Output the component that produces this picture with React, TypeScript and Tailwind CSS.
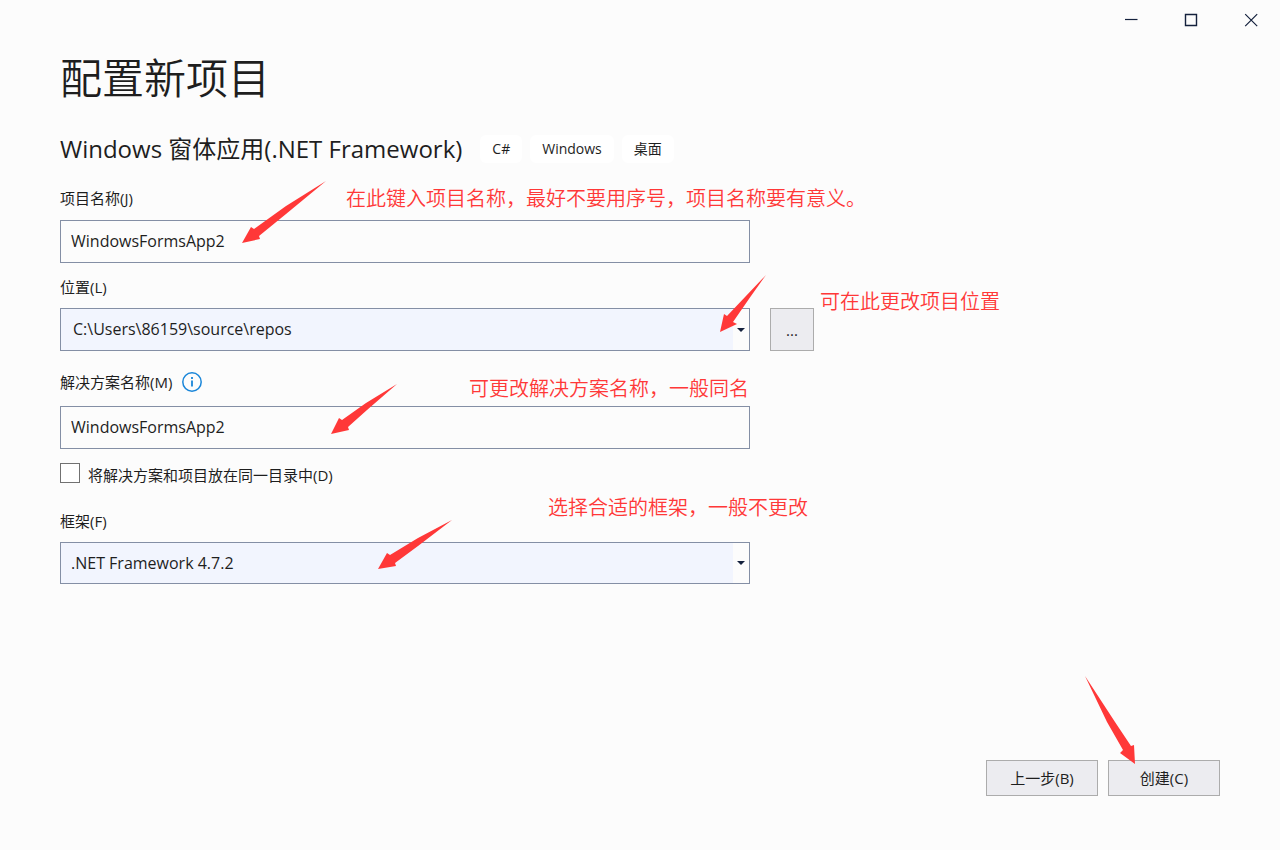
import type { ReactNode } from "react";

const inputClass =
  "block h-[43px] w-full rounded-none border border-[#848fa5] bg-[#fcfcfc] px-[10px] pb-0.5 text-[16px] text-[#1e1e1e] outline-none";

const buttonClass =
  "border border-[#acacac] bg-[#ececf0] text-[15px] text-[#1e1e1e]";

const tags = ["C#", "Windows", "桌面"];

function WindowControls() {
  return (
    <header className="flex h-10 shrink-0 justify-end">
      <button
        type="button"
        aria-label="最小化"
        className="flex w-[60px] items-center justify-center"
      >
        <svg className="h-4 w-4" viewBox="0 0 16 16">
          <path d="M3 7.5h12.5" stroke="#14213d" strokeWidth="1.2" />
        </svg>
      </button>
      <button
        type="button"
        aria-label="最大化"
        className="flex w-[60px] items-center justify-center"
      >
        <svg className="h-4 w-4" viewBox="0 0 16 16" fill="none">
          <path d="M3.5 2.5h11v11h-11z" stroke="#14213d" strokeWidth="1.4" />
        </svg>
      </button>
      <button
        type="button"
        aria-label="关闭"
        className="flex w-[60px] items-center justify-center"
      >
        <svg className="h-4 w-4" viewBox="0 0 16 16">
          <path
            d="M3.2 2.2l12 12M15.2 2.2l-12 12"
            stroke="#14213d"
            strokeWidth="1.2"
          />
        </svg>
      </button>
    </header>
  );
}

function Arrow({ points, className }: { points: string; className: string }) {
  return (
    <svg
      className={`pointer-events-none absolute z-10 overflow-visible ${className}`}
      fill="#ff3838"
      aria-hidden="true"
    >
      <polygon points={points} />
    </svg>
  );
}

function Note({ children, className }: { children: ReactNode; className: string }) {
  return (
    <p
      className={`pointer-events-none absolute z-10 text-[20px] leading-7 font-[350] whitespace-nowrap text-[#ff3838] ${className}`}
    >
      {children}
    </p>
  );
}

function Select({ id, value, className }: { id: string; value: string; className: string }) {
  return (
    <div className="relative min-w-0 flex-1">
      <select
        id={id}
        className={`block w-full appearance-none rounded-none border border-[#848fa5] bg-[#f2f5fe] pr-6 text-[16px] text-[#1e1e1e] outline-none ${className}`}
      >
        <option>{value}</option>
      </select>
      <span className="pointer-events-none absolute inset-y-px right-px flex w-4 items-center justify-center bg-[#fcfcfc]">
        <svg className="h-1 w-2" viewBox="0 0 8 4" fill="#14213d">
          <path d="M0 0h8L4 4z" />
        </svg>
      </span>
    </div>
  );
}

export default function App() {
  return (
    <div className="flex min-h-screen flex-col bg-[#fcfcfc] font-['Open_Sans','Noto_Sans_CJK_SC',sans-serif] text-[15px] leading-[22px] text-[#1e1e1e]">
      <WindowControls />

      <main className="flex-1 px-[60px] pt-2">
        <h1 className="text-[42px] leading-[60px] font-[350]">配置新项目</h1>

        <div className="mt-[27px] flex items-center gap-[18px]">
          <h2 className="text-[24px] leading-7">
            Windows 窗体应用(.NET Framework)
          </h2>
          <ul className="flex gap-2">
            {tags.map((tag) => (
              <li key={tag} className="rounded-md bg-white px-3 text-[14px] leading-7">
                {tag}
              </li>
            ))}
          </ul>
        </div>

        {/* Project name */}
        <div className="relative mt-6 flex max-w-[690px] flex-col gap-[11px]">
          <label htmlFor="project">项目名称(J)</label>
          <input id="project" className={inputClass} defaultValue="WindowsFormsApp2" />
          <Note className="-top-0.5 left-[286px]">
            在此键入项目名称，最好不要用序号，项目名称要有意义。
          </Note>
          <Arrow
            className="-top-2 left-[182px] h-16 w-[85px]"
            points="0,64 9,48 12,50 44,27 84,2 44,35 17,57 18,60"
          />
        </div>

        {/* Location */}
        <div className="relative mt-[13px] flex max-w-[754px] flex-col gap-[10px]">
          <label htmlFor="location">位置(L)</label>
          <div className="flex gap-5">
            <Select
              id="location"
              value="C:\Users\86159\source\repos"
              className="h-[43px] pb-0.5 pl-3"
            />
            <button type="button" aria-label="浏览" className={`w-11 ${buttonClass}`}>
              ...
            </button>
          </div>
          <Note className="top-3 left-[760px]">可在此更改项目位置</Note>
          <Arrow
            className="-top-px left-[660px] h-14 w-12"
            points="0,57 4,39 7,41 46,0 31,21 13,47 17,49"
          />
        </div>

        {/* Solution name */}
        <div className="relative mt-5 flex max-w-[690px] flex-col gap-[13px]">
          <div className="flex items-center gap-[10px]">
            <label htmlFor="solution">解决方案名称(M)</label>
            <svg className="h-5 w-5" viewBox="0 0 20 20" fill="none" role="img" aria-label="信息">
              <circle cx="10" cy="10" r="9.2" stroke="#1a86d9" strokeWidth="1.5" />
              <path d="M10 8.5v6M10 5v2" stroke="#1a86d9" strokeWidth="1.8" />
            </svg>
          </div>
          <input id="solution" className={inputClass} defaultValue="WindowsFormsApp2" />
          <Note className="top-1 left-[409px]">可更改解决方案名称，一般同名</Note>
          <Arrow
            className="top-[13px] left-[271px] h-[50px] w-[66px]"
            points="0,50 8,34 11,36 35,19 66,0 36,26 17,43 18,46"
          />
        </div>

        <div className="mt-[14px] flex items-start gap-2">
          <input
            id="same-dir"
            type="checkbox"
            className="h-5 w-5 appearance-none border border-[#717171] bg-white checked:bg-[#1a86d9]"
          />
          <label htmlFor="same-dir" className="leading-6">
            将解决方案和项目放在同一目录中(D)
          </label>
        </div>

        {/* Framework */}
        <div className="relative mt-[23px] flex max-w-[690px] flex-col gap-[10px]">
          <label htmlFor="framework">框架(F)</label>
          <div className="flex">
            <Select
              id="framework"
              value=".NET Framework 4.7.2"
              className="h-[42px] pl-[10px]"
            />
          </div>
          <Note className="-top-4 left-[488px]">选择合适的框架，一般不更改</Note>
          <Arrow
            className="top-[10px] left-[318px] h-[50px] w-[74px]"
            points="0,49 9,33 12,35 40,18 74,0 40,26 17,43 18,46"
          />
        </div>
      </main>

      <footer className="flex justify-end gap-[10px] px-[60px] pb-[54px]">
        <button type="button" className={`h-9 w-28 ${buttonClass}`}>
          上一步(B)
        </button>
        <div className="relative">
          <button type="button" className={`h-9 w-28 ${buttonClass}`}>
            创建(C)
          </button>
          <Arrow
            className="-top-[84px] -left-[23px] h-[87px] w-[50px]"
            points="50,88 35,77 38,74 22,46 0,0 30,46 46,70 49,69"
          />
        </div>
      </footer>
    </div>
  );
}
